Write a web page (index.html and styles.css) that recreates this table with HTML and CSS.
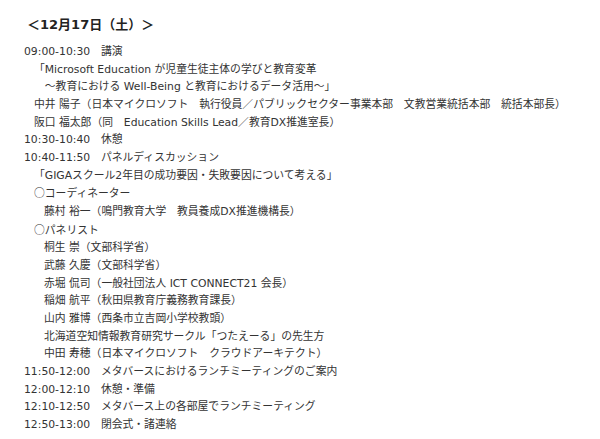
FILE: index.html
```html
<!DOCTYPE html>
<html lang="ja">
<head>
<meta charset="utf-8">
<link rel="stylesheet" href="styles.css">
</head>
<body>
<section class="program">
  <h2 class="day">＜12月17日（土）＞</h2>
  <div class="lines">
    <p class="time">09:00-10:30　講演</p>
    <p class="sub">「Microsoft Education が児童生徒主体の学びと教育変革</p>
    <p class="sub">　～教育における Well-Being と教育におけるデータ活用～」</p>
    <p class="sub">中井 陽子（日本マイクロソフト　執行役員／パブリックセクター事業本部　文教営業統括本部　統括本部長）</p>
    <p class="sub">阪口 福太郎（同　Education Skills Lead／教育DX推進室長）</p>
    <p class="time">10:30-10:40　休憩</p>
    <p class="time">10:40-11:50　パネルディスカッション</p>
    <p class="sub">「GIGAスクール2年目の成功要因・失敗要因について考える」</p>
    <p class="sub"><span class="mark">○</span>コーディネーター</p>
    <p class="person">藤村 裕一（鳴門教育大学　教員養成DX推進機構長）</p>
    <p class="sub"><span class="mark">○</span>パネリスト</p>
    <p class="person">桐生 崇（文部科学省）</p>
    <p class="person">武藤 久慶（文部科学省）</p>
    <p class="person">赤堀 侃司（一般社団法人 ICT CONNECT21 会長）</p>
    <p class="person">稲畑 航平（秋田県教育庁義務教育課長）</p>
    <p class="person">山内 雅博（西条市立吉岡小学校教頭）</p>
    <p class="person">北海道空知情報教育研究サークル「つたえーる」の先生方</p>
    <p class="person">中田 寿穂（日本マイクロソフト　クラウドアーキテクト）</p>
    <p class="time">11:50-12:00　メタバースにおけるランチミーティングのご案内</p>
    <p class="time">12:00-12:10　休憩・準備</p>
    <p class="time">12:10-12:50　メタバース上の各部屋でランチミーティング</p>
    <p class="time">12:50-13:00　閉会式・諸連絡</p>
  </div>
</section>
</body>
</html>
```
FILE: styles.css
```css
html, body {
  margin: 0;
  padding: 0;
  background: #ffffff;
}
body {
  font-family: "DejaVu Sans", "Noto Sans CJK JP", sans-serif;
  color: #333333;
}
.program {
  padding-top: 15px;
}
.day {
  margin: 0 0 8px 0;
  padding-left: 27px;
  font-family: "DejaVu Sans", "Noto Sans CJK JP", sans-serif;
  font-size: 13px;
  line-height: 20px;
  font-weight: bold;
  color: #222222;
}
.lines p {
  margin: 0;
  font-size: 10.8px;
  line-height: 17.67px;
  white-space: nowrap;
}
.mark {
  font-family: "Noto Sans CJK JP", sans-serif;
}
.time {
  padding-left: 24px;
}
.sub {
  padding-left: 34px;
}
.person {
  padding-left: 44px;
}
```
